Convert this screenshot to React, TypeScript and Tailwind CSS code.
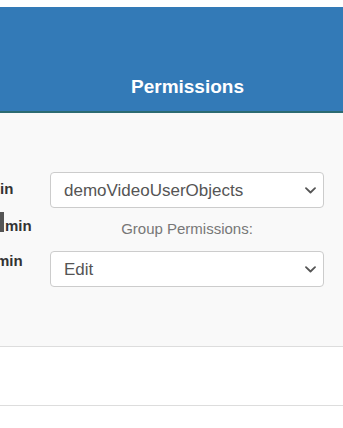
import React from "react";

function Chevron() {
  return (
    <svg width="11" height="7" viewBox="0 0 11 7" className="shrink-0">
      <path d="M1 1.2 L5.5 5.5 L10 1.2" fill="none" stroke="#555" strokeWidth="1.8" strokeLinecap="round" strokeLinejoin="round" />
    </svg>
  );
}

function Select({ value }: { value: string }) {
  return (
    <div className="flex h-[36px] items-center justify-between rounded-[4px] border border-[#cccccc] bg-white pl-[13px] pr-[7px]">
      <span className="text-[17px] leading-none text-[#555555]">{value}</span>
      <Chevron />
    </div>
  );
}

export default function App() {
  return (
    <div className="w-[343px] h-[428px] overflow-hidden bg-white" style={{ fontFamily: '"Liberation Sans", Arial, sans-serif' }}>
      <div className="h-[7px] bg-white" />
      <div className="flex h-[104px] items-end bg-[#337ab7] pb-[15px] pl-[131px]">
        <span className="text-[19px] font-bold leading-none text-white">Permissions</span>
      </div>
      <div className="h-[2px] bg-[#2c6b72]" />
      <div className="flex h-[233px] bg-[#f9f9f9] pt-[59px]">
        <div className="flex w-[50px] flex-col overflow-hidden text-[15px] font-bold leading-none text-[#333333]">
          <div className="mt-[9px] h-[15px]">in</div>
          <div className="mt-[16px] flex h-[20px] items-start">
            <div className="mr-[1px] h-[20px] w-[4px] shrink-0 bg-[#555555]" />
            <span className="mt-[6px]">min</span>
          </div>
          <div className="mt-[21px] ml-[-4px] h-[15px]">min</div>
        </div>
        <div className="flex w-[274px] flex-col">
          <Select value="demoVideoUserObjects" />
          <div className="flex h-[43px] items-center justify-center pb-[2px] text-[15px] leading-none text-[#777777]">Group Permissions:</div>
          <Select value="Edit" />
        </div>
      </div>
      <div className="h-[1px] bg-[#dddddd]" />
      <div className="h-[58px] bg-white" />
      <div className="h-[1px] bg-[#dddddd]" />
    </div>
  );
}
